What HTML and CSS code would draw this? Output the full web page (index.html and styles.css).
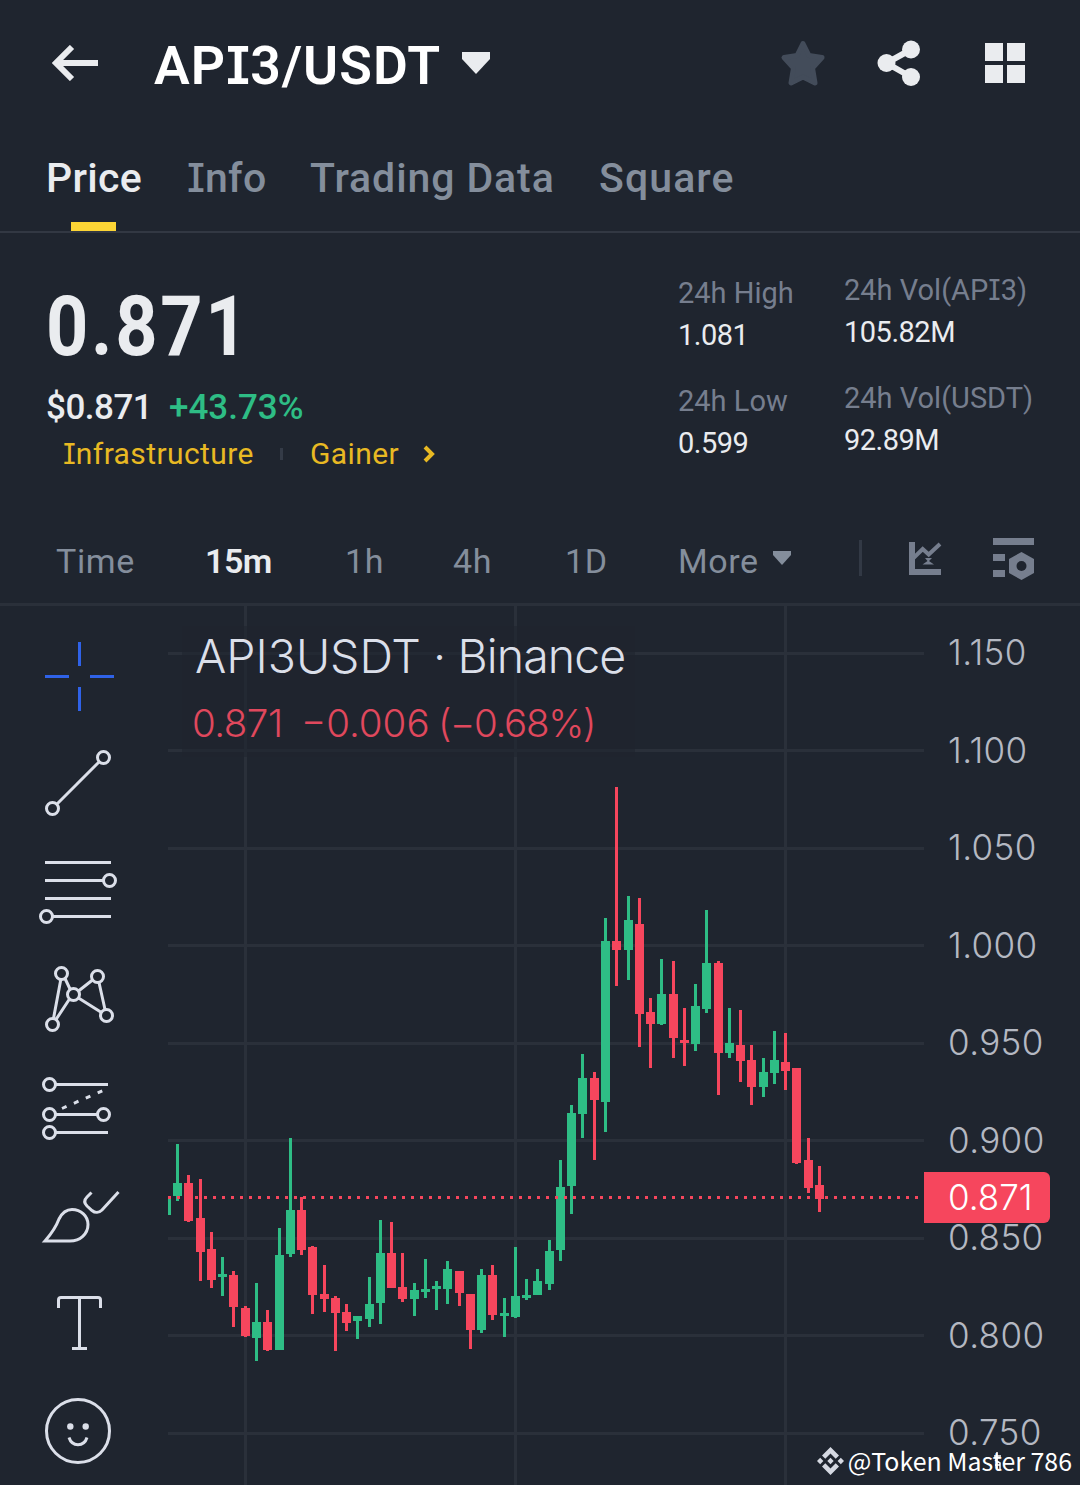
FILE: index.html
```
<!DOCTYPE html>
<html lang="en">
<head>
  <meta charset="UTF-8">
  <meta name="viewport" content="width=device-width, initial-scale=1.0">
  <title>API3/USDT</title>
  <link rel="stylesheet" href="styles.css">
</head>
<body>

  <header class="header">
    <svg class="back" width="46" height="36" viewBox="0 0 46 36">
      <path d="M46 18H5M20 2L4 18l16 16" fill="none" stroke="#eaecef" stroke-width="6"/>
    </svg>
    <h1 class="pair">AP<span class="cap-i">I</span>3/USDT</h1>
    <svg class="pair-caret" width="28" height="22" viewBox="0 0 28 22">
      <path d="M0 0h28v7L14 22 0 7z" fill="#eaecef"/>
    </svg>
    <div class="actions">
      <svg width="46" height="48" viewBox="0 0 46 48">
        <path d="M23 4.500l6 12 13 2-9.500 10.500 2.500 15L23 38 11 44l2.500-15L4 18.500l13-2z" fill="#434c5a" stroke="#434c5a" stroke-width="5" stroke-linejoin="round"/>
      </svg>
      <svg width="44" height="46" viewBox="0 0 44 46">
        <path d="M34 9.500L9.500 23 34 37" fill="none" stroke="#eaecef" stroke-width="6"/>
        <circle cx="34" cy="9.500" r="9" fill="#eaecef"/>
        <circle cx="9.500" cy="23" r="9" fill="#eaecef"/>
        <circle cx="34" cy="37" r="9" fill="#eaecef"/>
      </svg>
      <svg width="40" height="40" viewBox="0 0 40 40">
        <path d="M0 0h18v18H0zM22 0h18v18H22zM0 22h18v18H0zM22 22h18v18H22z" fill="#eaecef"/>
      </svg>
    </div>
  </header>

  <nav class="tabs">
    <a class="tab active">Price</a>
    <a class="tab info"><span class="cap-i">I</span>nfo</a>
    <a class="tab trading">Trading Data</a>
    <a class="tab square">Square</a>
  </nav>

  <section class="summary">
    <div class="quote">
      <div class="last-price">0.871</div>
      <div class="change">
        <span class="fiat">$0.871</span>
        <span class="percent">+43.73%</span>
      </div>
      <div class="tags">
        <span class="tag infra"><span class="cap-i">I</span>nfrastructure</span>
        <span class="tag-divider"></span>
        <span class="tag gainer">Gainer</span>
        <svg width="12" height="18" viewBox="0 0 12 18">
          <path d="M2 2l7 7-7 7" fill="none" stroke="#e8b923" stroke-width="4"/>
        </svg>
      </div>
    </div>
    <dl class="stats stats-range">
      <dt>24h High</dt>
      <dd>1.081</dd>
      <dt>24h Low</dt>
      <dd>0.599</dd>
    </dl>
    <dl class="stats stats-volume">
      <dt>24h Vol(AP<span class="cap-i">I</span>3)</dt>
      <dd>105.82M</dd>
      <dt>24h Vol(USDT)</dt>
      <dd>92.89M</dd>
    </dl>
  </section>

  <div class="intervals">
    <span>Time</span>
    <span class="selected">15m</span>
    <span>1h</span>
    <span>4h</span>
    <span>1D</span>
    <span>More</span>
    <svg class="more-caret" width="18" height="14" viewBox="0 0 18 14">
      <path d="M0 0h18v4L9 14 0 4z" fill="#848e9c"/>
    </svg>
    <i class="bar-divider"></i>
    <svg class="indicator" width="33" height="33" viewBox="0 0 33 33">
      <path d="M0 0h6v27h26v6H0z" fill="#767e8e"/>
      <path d="M4.500 16l9.200-9 6 5.500L31 2" fill="none" stroke="#767e8e" stroke-width="4"/>
      <path d="M16 16h7l-3 3 5 3.500H13.500l5-3.500z" fill="#767e8e"/>
    </svg>
    <svg class="chart-settings" width="41" height="43" viewBox="0 0 41 43">
      <path d="M0 0h41v7H0zM0 16h12v7H0zM0 32h12v7H0z" fill="#767e8e"/>
      <path d="M28.500 14L41 21v14l-12.500 7L16 35V21z" fill="#767e8e"/>
      <circle cx="28.500" cy="28" r="5" fill="#1f252f"/>
    </svg>
  </div>

  <main class="chart">
    <div class="toolbar">
      <svg class="tool crosshair" viewBox="0 0 108 108">
        <path d="M55.500 20v24M55.500 65v24M21 54.500h24M66 54.500h24"/>
      </svg>
      <svg class="tool" viewBox="0 0 108 108">
        <path d="M33 74L75 32"/>
        <circle cx="79.500" cy="27.500" r="6"/>
        <circle cx="28.500" cy="78.500" r="6"/>
      </svg>
      <svg class="tool" viewBox="0 0 108 108">
        <path d="M21 24.500h66M21 42.500h58M21 60.500h66M29 78.500h58"/>
        <circle cx="85.500" cy="42.500" r="6"/>
        <circle cx="22.500" cy="78.500" r="6"/>
      </svg>
      <svg class="tool" viewBox="0 0 108 108">
        <path d="M36.800 33.500L29.500 72.500M41 32.500l5 10.500M45.500 53L32 73.500M54.500 45l14-11M75 36.500l6 27M54.500 52l23 14.500"/>
        <circle cx="37.500" cy="27.500" r="6"/>
        <circle cx="73.500" cy="30.500" r="6"/>
        <circle cx="49.500" cy="48.500" r="6"/>
        <circle cx="82.500" cy="69.500" r="6"/>
        <circle cx="28.500" cy="78.500" r="6"/>
      </svg>
      <svg class="tool" viewBox="0 0 108 108">
        <path d="M32 30.500h52M32 60.500h41M32 78.500h52"/>
        <path d="M38 54.500L80 36" stroke-dasharray="5 8"/>
        <circle cx="25.500" cy="30.500" r="6"/>
        <circle cx="25.500" cy="60.500" r="6"/>
        <circle cx="79.500" cy="60.500" r="6"/>
        <circle cx="25.500" cy="78.500" r="6"/>
      </svg>
      <svg class="tool" viewBox="0 0 108 108">
        <path d="M21 79C28 71 32 65 35 57c3-6 7-9.500 13-9.500 9 0 16 6.500 16 15C64 72 56 79 46 79z"/>
        <path d="M67.500 30.500L63 35c-3 3-3 6 0 9l5 4.500c3 2.500 7 2.500 10-.5L94.500 30"/>
      </svg>
      <svg class="tool" viewBox="0 0 108 108">
        <path d="M34.500 38v-8q0-2.500 2.500-2.500h37q2.500 0 2.500 2.500v8M55.500 28v50M48 78.500h15"/>
      </svg>
      <svg class="tool" viewBox="0 0 108 108">
        <circle cx="54" cy="53" r="31.500"/>
        <path d="M45 59.500c3 9.500 15 9.500 18 0"/>
        <circle class="eye" cx="46.300" cy="48.500" r="3.200"/>
        <circle class="eye" cx="61.700" cy="48.500" r="3.200"/>
      </svg>
    </div>

    <div class="plot">
      <svg id="candles" width="756" height="879" viewBox="168 606 756 879">
        <path class="grid" d="M168 653.500h756M168 750.500h756M168 848.500h756M168 945.500h756M168 1043.500h756M168 1140.500h756M168 1238.500h756M168 1335.500h756M168 1433.500h756M245.500 606v879M515.500 606v879M785.500 606v879"/>
      </svg>
      <div class="legend">
        <div class="symbol">API3USDT<span class="exchange"> · Binance</span></div>
        <div class="delta">
          <span class="delta-price">0.871</span>
          <span class="delta-value">−0.006</span>
          <span class="delta-percent">(−0.68%)</span>
        </div>
      </div>
    </div>

    <div class="axis">
      <span>1.150</span>
      <span>1.100</span>
      <span>1.050</span>
      <span>1.000</span>
      <span>0.950</span>
      <span>0.900</span>
      <span>0.850</span>
      <span>0.800</span>
      <span>0.750</span>
      <div class="price-label">0.871</div>
    </div>
  </main>

  <div class="watermark">
    <svg width="27" height="28" viewBox="0 0 27 28">
      <path d="M13.500 0L22 8.500l-3.300 3.300-5.200-5.200-5.200 5.200L5 8.500zM13.500 28L22 19.500l-3.300-3.300-5.200 5.200-5.200-5.200L5 19.500zM3.200 10.800L6.400 14l-3.200 3.200L0 14zM23.800 10.800L27 14l-3.200 3.200-3.200-3.200zM13.500 10.800l3.200 3.200-3.200 3.200-3.200-3.200z" fill="#d5d9e2"/>
    </svg>
    <span>@Token Master 786</span>
    <svg class="cursor" width="10" height="18" viewBox="0 0 10 18">
      <path d="M4 0v16M1 4h7M2 8l5 3v6M2 13h5" fill="none" stroke="#fff" stroke-width="1.500"/>
    </svg>
  </div>

  <script>
    const UP = '#2ebd85';
    const DOWN = '#f6465d';

    // x, wick top, body top, body bottom, wick bottom, up
    const candles = [
      [177.5, 1144, 1183, 1196, 1201, 1],
      [188.5, 1175, 1183, 1221, 1222, 0],
      [200.5, 1179, 1218, 1252, 1281, 0],
      [211.5, 1232, 1249, 1280, 1288, 0],
      [222.5, 1257, 1274, 1277, 1296, 1],
      [233.5, 1271, 1275, 1307, 1327, 0],
      [245.5, 1306, 1308, 1336, 1337, 0],
      [256.5, 1283, 1322, 1338, 1361, 1],
      [267.5, 1310, 1322, 1350, 1351, 0],
      [279.5, 1228, 1255, 1350, 1350, 1],
      [290.5, 1138, 1210, 1254, 1257, 1],
      [301.5, 1197, 1210, 1250, 1255, 0],
      [312.5, 1246, 1247, 1295, 1314, 0],
      [324.5, 1265, 1294, 1299, 1312, 0],
      [335.5, 1296, 1298, 1313, 1351, 0],
      [346.5, 1304, 1312, 1323, 1331, 0],
      [357.5, 1316, 1316, 1321, 1339, 1],
      [369.5, 1277, 1304, 1319, 1327, 1],
      [380.5, 1220, 1253, 1303, 1324, 1],
      [391.5, 1222, 1253, 1288, 1288, 0],
      [402.5, 1253, 1287, 1299, 1302, 0],
      [414.5, 1283, 1290, 1299, 1316, 1],
      [425.5, 1259, 1289, 1292, 1298, 1],
      [436.5, 1281, 1286, 1289, 1310, 1],
      [447.5, 1261, 1269, 1289, 1304, 1],
      [459.5, 1271, 1271, 1293, 1306, 0],
      [470.5, 1294, 1294, 1330, 1349, 0],
      [481.5, 1269, 1275, 1330, 1333, 1],
      [492.5, 1265, 1275, 1315, 1320, 0],
      [504.5, 1298, 1313, 1316, 1337, 1],
      [515.5, 1247, 1296, 1317, 1318, 1],
      [526.5, 1279, 1295, 1298, 1300, 1],
      [537.5, 1269, 1281, 1295, 1295, 1],
      [549.5, 1240, 1251, 1284, 1290, 1],
      [560.5, 1160, 1187, 1250, 1261, 1],
      [571.5, 1105, 1113, 1186, 1214, 1],
      [582.5, 1054, 1078, 1114, 1138, 1],
      [594.5, 1072, 1078, 1100, 1160, 0],
      [605.5, 918, 941, 1102, 1132, 1],
      [616.5, 787, 941, 950, 986, 0],
      [628.5, 896, 920, 950, 980, 1],
      [639.5, 898, 924, 1014, 1047, 0],
      [650.5, 998, 1012, 1024, 1068, 0],
      [661.5, 959, 994, 1024, 1025, 1],
      [673.5, 961, 994, 1038, 1058, 0],
      [684.5, 1008, 1040, 1043, 1066, 0],
      [695.5, 984, 1006, 1044, 1051, 1],
      [706.5, 910, 963, 1009, 1013, 1],
      [718.5, 961, 963, 1053, 1095, 0],
      [729.5, 1008, 1043, 1053, 1058, 1],
      [740.5, 1010, 1045, 1061, 1082, 0],
      [751.5, 1045, 1060, 1087, 1105, 0],
      [763.5, 1058, 1072, 1087, 1097, 1],
      [774.5, 1031, 1060, 1073, 1084, 1],
      [785.5, 1033, 1062, 1071, 1090, 0],
      [796.5, 1068, 1068, 1163, 1164, 0],
      [808.5, 1138, 1160, 1188, 1193, 0],
      [819.5, 1166, 1185, 1199, 1212, 0]
    ];

    const svg = document.getElementById('candles');

    function rect(x, y, width, height, fill) {
      const el = document.createElementNS('http://www.w3.org/2000/svg', 'rect');
      el.setAttribute('x', x);
      el.setAttribute('y', y);
      el.setAttribute('width', width);
      el.setAttribute('height', height);
      el.setAttribute('fill', fill);
      svg.appendChild(el);
    }

    // the first candle is cut off by the left edge
    rect(168, 1196, 3, 19, UP);

    candles.forEach(([x, high, top, bottom, low, up]) => {
      const color = up ? UP : DOWN;
      rect(x - 1.5, high, 3, low - high, color);
      rect(x - 4.5, top, 9, bottom - top, color);
    });

    // last price line
    for (let x = 168; x < 920; x += 9) {
      rect(x, 1196, 3, 3, DOWN);
    }
  </script>
</body>
</html>
```
FILE: styles.css
```
* {
  box-sizing: border-box;
}

body {
  width: 1080px;
  height: 1485px;
  margin: 0;
  overflow: hidden;
  position: relative;
  background-color: #1f252f;
  color: #eaecef;
  font-family: Roboto, "Liberation Sans", sans-serif;
}

svg {
  display: block;
  flex: none;
}

.cap-i {
  font-family: Inter, sans-serif;
  font-size: 0.97em;
  font-feature-settings: "cv08" 1;
  line-height: 1;
  letter-spacing: 0;
}

/* header */
.header {
  display: flex;
  align-items: center;
  height: 126px;
  padding: 0 55px 0 52px;
}

.pair {
  width: 308px;
  margin: 0 0 0 56px;
  padding-top: 5px;
  font-size: 53.5px;
  font-weight: 600;
  line-height: 60px;
  letter-spacing: 1px;
  white-space: nowrap;
  color: #fff;
}

.actions {
  display: flex;
  align-items: center;
  margin-left: auto;
}

.actions svg + svg {
  margin-left: 51px;
}

.actions svg:last-child {
  margin-left: 64px;
}

/* tabs */
.tabs {
  display: flex;
  height: 107px;
  padding: 22px 0 0 46px;
  border-bottom: 2px solid #323843;
}

.tab {
  width: 141px;
  font-size: 41px;
  font-weight: 500;
  line-height: 60px;
  letter-spacing: 0.3px;
  white-space: nowrap;
  color: #848e9c;
}

.tab.active {
  color: #eaecef;
}

.tab.active::after {
  content: "";
  display: block;
  width: 45px;
  height: 9px;
  margin: 14px 0 0 25px;
  background-color: #fcd535;
}

.tab.info {
  width: 123px;
}

.tab.trading {
  width: 289px;
  letter-spacing: 0.9px;
}

.tab.square {
  letter-spacing: 1.1px;
}

/* price and 24h stats */
.summary {
  display: flex;
  height: 285px;
  padding: 36px 0 0 46px;
}

.quote {
  width: 632px;
  padding-top: 16px;
}

/* narrow digits */
.last-price {
  font-size: 83px;
  font-weight: 700;
  line-height: 84px;
  letter-spacing: 3px;
  transform: scaleX(0.89);
  transform-origin: left;
}

.change {
  display: flex;
  margin-top: 17px;
  font-size: 35px;
  font-weight: 500;
  line-height: 44px;
}

.fiat {
  width: 123px;
  letter-spacing: -0.5px;
}

.percent {
  color: #2ebd85;
}

.tags {
  display: flex;
  align-items: center;
  margin-top: 4px;
  padding-left: 17px;
  font-size: 30px;
  line-height: 40px;
  letter-spacing: 0.4px;
  color: #e8b923;
}

.infra {
  width: 217px;
}

.tag-divider {
  width: 3px;
  height: 12px;
  background-color: #343b47;
}

.gainer {
  width: 113px;
  margin-left: 27px;
}

.stats {
  margin: 0;
  font-size: 29px;
  line-height: 42px;
}

.stats dt {
  letter-spacing: 0;
  white-space: nowrap;
  color: #767e8e;
}

.stats dd {
  margin: 0 0 24px;
  letter-spacing: -0.5px;
}

.stats-range {
  width: 166px;
  padding-top: 3px;
}

/* interval bar */
.intervals {
  display: grid;
  grid-template-columns: 149px 140px 108px 112px 113px 95px 86px 50px 84px 41px;
  align-items: center;
  height: 88px;
  padding: 0 0 0 56px;
  border-bottom: 3px solid #2a303a;
  font-size: 34px;
  letter-spacing: 0.6px;
  color: #848e9c;
}

.selected {
  font-weight: 600;
  letter-spacing: -0.5px;
  color: #eaecef;
}

.more-caret {
  margin-bottom: 6px;
}

.bar-divider {
  width: 3px;
  height: 36px;
  margin-bottom: 6px;
  background-color: #323945;
}

.indicator {
  margin-bottom: 5px;
}

.chart-settings {
  margin-bottom: 2px;
}

/* chart */
.chart {
  display: grid;
  grid-template-columns: 168px 756px 156px;
  height: 879px;
}

.toolbar {
  padding: 16px 0 0 24px;
}

.tool {
  width: 108px;
  height: 108px;
  fill: none;
  stroke: #dbdfe9;
  stroke-width: 3;
}

.tool .eye {
  fill: #dbdfe9;
  stroke: none;
}

.crosshair {
  stroke: #2f62e8;
}

.plot {
  position: relative;
}

.grid {
  stroke: #2a303a;
  stroke-width: 3;
}

.legend {
  position: absolute;
  left: 14px;
  top: 20px;
  font-family: Inter, sans-serif;
  font-weight: 300;
  white-space: nowrap;
}

.symbol,
.delta {
  padding: 0 10px;
  background-color: rgba(31, 37, 47, 0.6);
}

.symbol {
  padding-left: 13px;
  font-size: 46.5px;
  line-height: 60px;
  color: #dbdfe9;
}

.exchange {
  letter-spacing: -0.9px;
}

.delta {
  display: flex;
  padding-top: 3px;
  font-size: 38.5px;
  line-height: 68px;
  color: #e0485d;
}

.delta-price {
  width: 109px;
  letter-spacing: -0.5px;
}

.delta-value {
  width: 137px;
}

.delta-percent {
  letter-spacing: -1.3px;
}

.axis {
  position: relative;
  margin-top: -1px;
  padding-left: 24px;
  font-family: Inter, sans-serif;
  font-weight: 300;
  font-size: 35px;
  letter-spacing: 0.4px;
  color: #b4b8c2;
}

.axis span {
  display: block;
  height: 97.5px;
  line-height: 94px;
}

.price-label {
  position: absolute;
  left: 0;
  top: 567px;
  width: 126px;
  height: 51px;
  padding-left: 24px;
  border-radius: 0 6px 6px 0;
  background-color: #f6465d;
  line-height: 50px;
  letter-spacing: 0;
  color: #fff;
}

/* watermark */
.watermark {
  position: absolute;
  right: 8px;
  bottom: 6px;
  display: flex;
  align-items: center;
  gap: 4px;
  font-family: "Noto Sans CJK SC", "Noto Sans", sans-serif;
  font-size: 24.9px;
  line-height: 37px;
  white-space: nowrap;
  color: #fff;
}

.cursor {
  position: absolute;
  right: 69px;
  top: 10px;
}
```
